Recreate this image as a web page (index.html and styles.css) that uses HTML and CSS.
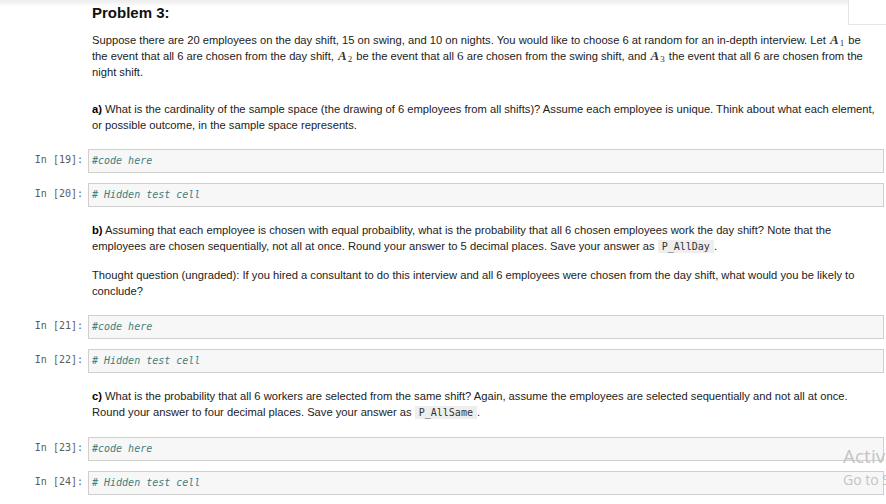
FILE: index.html
```html
<!DOCTYPE html>
<html>
<head>
<meta charset="utf-8">
<link rel="stylesheet" href="styles.css">
</head>
<body>
<div class="topshadow"></div>
<div class="corner"></div>
<div class="notebook">
  <div class="cell md first">
    <div class="prompt"></div>
    <div class="md-body">
      <h3 class="title">Problem 3:</h3>
      <p>Suppose there are 20 employees on the day shift, 15 on swing, and 10 on nights. You would like to choose 6 at random for an in-depth interview. Let <span class="math">A<sub>1</sub></span> be the event that all 6 are chosen from the day shift, <span class="math">A<sub>2</sub></span> be the event that all <span class="mnum">6</span> are chosen from the swing shift, and <span class="math">A<sub>3</sub></span> the event that all 6 are chosen from the night shift.</p>
    </div>
  </div>
  <div class="cell md">
    <div class="prompt"></div>
    <div class="md-body">
      <p><b>a)</b> What is the cardinality of the sample space (the drawing of 6 employees from all shifts)? Assume each employee is unique. Think about what each element, or possible outcome, in the sample space represents.</p>
    </div>
  </div>
  <div class="cell code">
    <div class="prompt">In [19]:</div>
    <div class="input"><span class="cm">#code here</span></div>
  </div>
  <div class="cell code">
    <div class="prompt">In [20]:</div>
    <div class="input"><span class="cm"># Hidden test cell</span></div>
  </div>
  <div class="cell md">
    <div class="prompt"></div>
    <div class="md-body">
      <p><b>b)</b> Assuming that each employee is chosen with equal probaiblity, what is the probability that all 6 chosen employees work the day shift? Note that the employees are chosen sequentially, not all at once. Round your answer to 5 decimal places. Save your answer as <code>P_AllDay</code>.</p>
      <p>Thought question (ungraded): If you hired a consultant to do this interview and all 6 employees were chosen from the day shift, what would you be likely to conclude?</p>
    </div>
  </div>
  <div class="cell code">
    <div class="prompt">In [21]:</div>
    <div class="input"><span class="cm">#code here</span></div>
  </div>
  <div class="cell code">
    <div class="prompt">In [22]:</div>
    <div class="input"><span class="cm"># Hidden test cell</span></div>
  </div>
  <div class="cell md">
    <div class="prompt"></div>
    <div class="md-body">
      <p><b>c)</b> What is the probability that all 6 workers are selected from the same shift? Again, assume the employees are selected sequentially and not all at once. Round your answer to four decimal places. Save your answer as <code>P_AllSame</code>.</p>
    </div>
  </div>
  <div class="cell code">
    <div class="prompt">In [23]:</div>
    <div class="input"><span class="cm">#code here</span></div>
  </div>
  <div class="cell code">
    <div class="prompt">In [24]:</div>
    <div class="input"><span class="cm"># Hidden test cell</span></div>
  </div>
</div>
<div class="watermark">
  <div class="wm1">Activate Windows</div>
  <div class="wm2">Go to Settings to activate Windows.</div>
</div>
</body>
</html>
```
FILE: styles.css
```css
html, body {
  margin: 0;
  padding: 0;
  background: #fff;
  width: 886px;
  height: 504px;
  overflow: hidden;
  position: relative;
}
body {
  font-family: "Liberation Sans", Arial, sans-serif;
  font-size: 11.2px;
  line-height: 16px;
  color: #222;
}
.topshadow {
  position: absolute;
  left: 0;
  top: 0;
  width: 886px;
  height: 7px;
  background: linear-gradient(#ececec, rgba(255,255,255,0));
}
.corner {
  position: absolute;
  left: 848px;
  top: 0;
  width: 38px;
  height: 24px;
  background: #fff;
  border-left: 1px solid #e6e6e6;
  border-bottom: 1px solid #e6e6e6;
}
.notebook {
  display: flex;
  flex-direction: column;
  gap: 10px;
  width: 884px;
}
.cell {
  display: flex;
  flex-direction: row;
}
.prompt {
  width: 83px;
  flex: none;
  padding-right: 5px;
  text-align: right;
  font-family: "DejaVu Sans Mono", monospace;
  font-size: 10px;
  color: #5c5c5c;
  line-height: 22px;
}
.md {
  padding-top: 5px;
  padding-bottom: 6px;
}
.md.first {
  padding-top: 4px;
}
.md-body {
  flex: 1;
  padding-left: 4px;
  padding-right: 7px;
}
.md-body p {
  margin: 12px 0 0 0;
}
.md-body p:first-child {
  margin-top: 0;
}
.title {
  margin: 0;
  font-size: 15px;
  line-height: 18px;
  font-weight: bold;
  color: #111;
}
.title + p {
  margin-top: 10px;
}
b {
  font-weight: bold;
  color: #000;
}
.math {
  font-family: "Liberation Serif", serif;
  font-style: italic;
  font-weight: bold;
  font-size: 13px;
  color: #333;
  margin: 0 1px;
}
.math sub {
  font-style: normal;
  font-weight: normal;
  font-size: 9px;
  vertical-align: -2px;
  line-height: 0;
  margin-left: 1px;
}
.mnum {
  font-family: "Liberation Serif", serif;
  font-size: 13px;
}
code {
  font-family: "DejaVu Sans Mono", monospace;
  font-size: 10px;
  background: #eee;
  padding: 1px 4px;
  color: #333;
}
.input {
  flex: 1;
  height: 22px;
  border: 1px solid #cfcfcf;
  background: #f7f7f7;
  padding-left: 3px;
  font-family: "DejaVu Sans Mono", monospace;
  font-size: 10px;
  line-height: 22px;
}
.cm {
  color: #408080;
  font-style: italic;
}
.watermark {
  position: absolute;
  left: 843px;
  top: 444px;
  white-space: nowrap;
  font-family: "Open Sans", sans-serif;
  color: #c4c4c4;
}
.wm1 {
  font-size: 19px;
  line-height: 24px;
}
.wm2 {
  font-size: 14px;
  line-height: 24px;
}
```
